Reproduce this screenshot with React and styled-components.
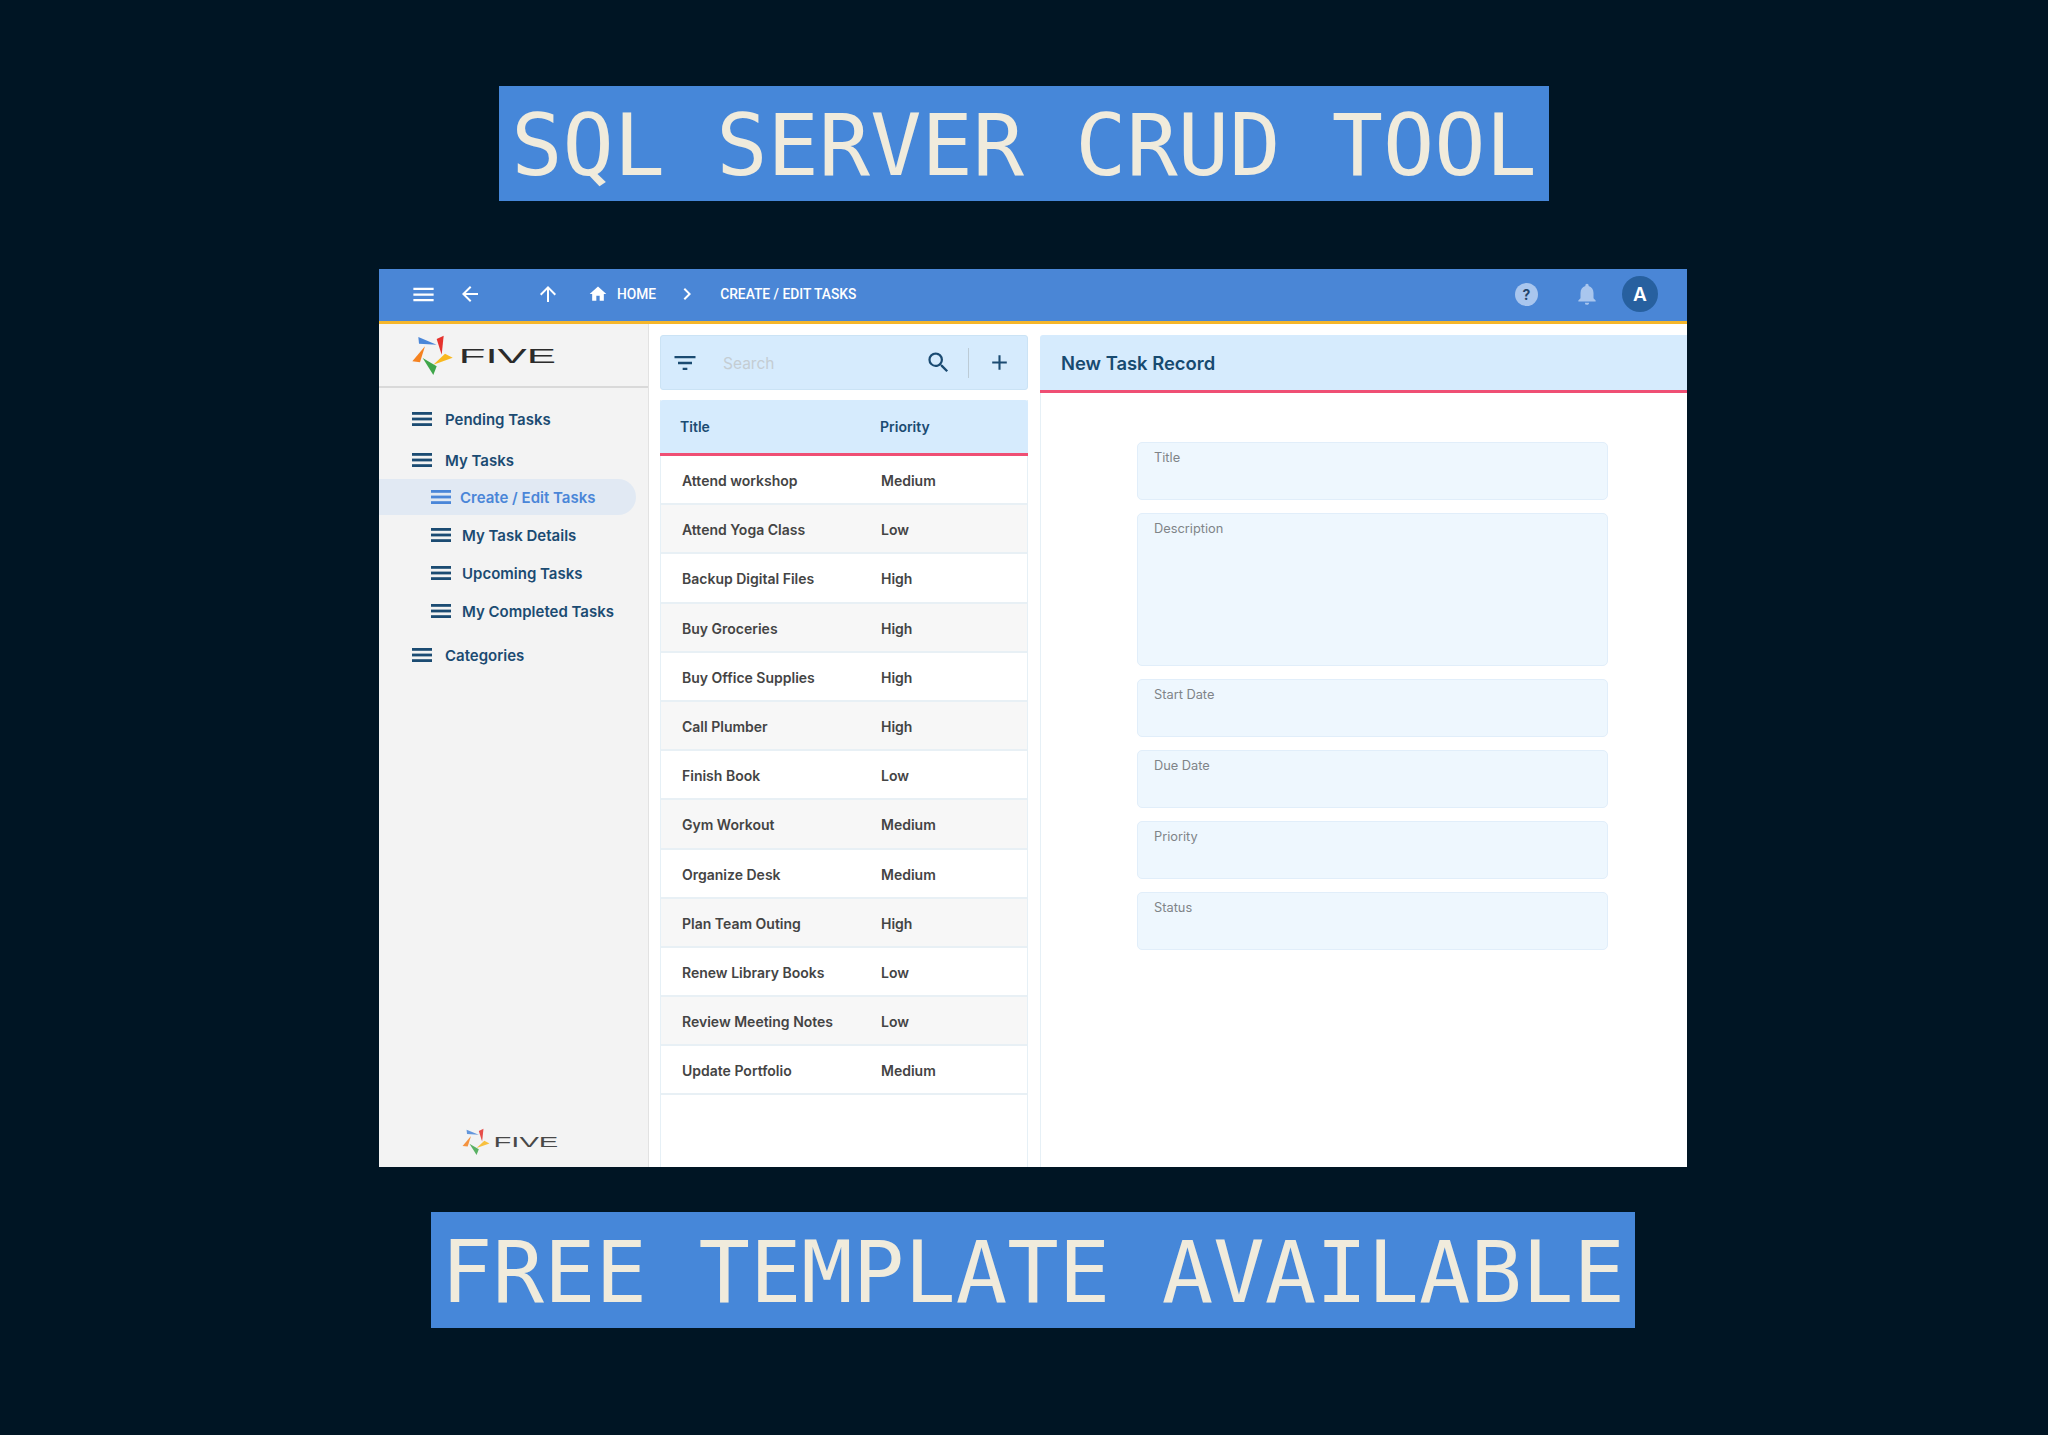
import React from 'react';
import styled, { createGlobalStyle } from 'styled-components';
import {
  MdMenu,
  MdArrowBack,
  MdArrowUpward,
  MdHome,
  MdChevronRight,
  MdSearch,
  MdAdd,
  MdFilterList,
  MdNotifications,
} from 'react-icons/md';

const GlobalStyle = createGlobalStyle`
  html, body {
    margin: 0;
    padding: 0;
    background: #001524;
  }
`;

const Page = styled.div`
  width: 2048px;
  height: 1435px;
  padding-top: 86px;
  box-sizing: border-box;
  overflow: hidden;
  background: #001524;
  font-family: Inter, "Liberation Sans", sans-serif;
`;

const Banner = styled.div`
  box-sizing: border-box;
  width: ${(p) => p.$width}px;
  height: ${(p) => p.$height}px;
  margin-left: ${(p) => p.$left}px;
  margin-top: ${(p) => p.$top}px;
  padding-top: 5px;
  display: flex;
  align-items: center;
  justify-content: center;
  background: #4687d9;
  color: #f0ebdc;
  font-family: "DejaVu Sans Mono", monospace;
  font-size: ${(p) => p.$font}px;
  line-height: 1;
  white-space: pre;
`;

const Window = styled.div`
  width: 1308px;
  height: 898px;
  margin: 68px 0 0 379px;
  display: flex;
  flex-direction: column;
  background: #fff;
`;

const Topbar = styled.header`
  flex: none;
  box-sizing: content-box;
  height: 50px;
  display: flex;
  align-items: center;
  padding: 0 29px 2px 31px;
  background: #4a86d6;
  border-bottom: 3px solid #f5b62b;
  color: #fff;
`;

const TopIcon = styled.span`
  display: flex;
  margin-left: ${(p) => p.$left || 0}px;
  font-size: ${(p) => p.$size || 24}px;
`;

const Crumb = styled.span`
  margin-left: ${(p) => p.$left}px;
  font-family: Roboto, sans-serif;
  font-size: 13.8px;
  font-weight: 500;
`;

const TopRight = styled.div`
  margin-left: auto;
  display: flex;
  align-items: center;
`;

const HelpBadge = styled.span`
  width: 23px;
  height: 23px;
  border-radius: 50%;
  display: flex;
  align-items: center;
  justify-content: center;
  background: #a9c6ee;
  color: #23456b;
  font-size: 14px;
  font-weight: 700;
`;

const BellIcon = styled.span`
  display: flex;
  margin-left: 36px;
  color: #a9c6ee;
  font-size: 26px;
`;

const Avatar = styled.span`
  width: 36px;
  height: 36px;
  margin-left: 22px;
  border-radius: 50%;
  display: flex;
  align-items: center;
  justify-content: center;
  background: #27609f;
  color: #fff;
  font-size: 19px;
  font-weight: 600;
`;

const Body = styled.div`
  flex: 1;
  min-height: 0;
  display: flex;
`;

const Sidebar = styled.aside`
  flex: none;
  box-sizing: border-box;
  width: 270px;
  display: flex;
  flex-direction: column;
  background: #f3f3f3;
  border-right: 1px solid #e2e2e2;
`;

const SideHead = styled.div`
  flex: none;
  box-sizing: border-box;
  height: 64px;
  padding: 9px 0 0 31px;
  border-bottom: 2px solid #d9d9d9;
`;

const Nav = styled.nav`
  display: flex;
  flex-direction: column;
  gap: 5px;
  padding-top: 13px;
`;

const NavGroup = styled.div`
  display: flex;
  flex-direction: column;
  margin-bottom: 3px;
`;

const SubList = styled.div`
  display: flex;
  flex-direction: column;
  gap: 2px;
  margin-top: 1px;
`;

const NavItem = styled.div`
  height: 36px;
  width: 257px;
  box-sizing: border-box;
  display: flex;
  align-items: center;
  gap: ${(p) => (p.$sub ? (p.$active ? 9 : 11) : 13)}px;
  padding-left: ${(p) => (p.$sub ? 52 : 33)}px;
  border-radius: 0 18px 18px 0;
  background: ${(p) => (p.$active ? '#e1e9f3' : 'transparent')};
  color: ${(p) => (p.$active ? '#4a86d8' : '#1b4b72')};
  font-size: 15px;
  font-weight: 600;
`;

const SideFoot = styled.div`
  margin-top: auto;
  display: flex;
  justify-content: center;
  padding: 0 7px 10px 0;
  opacity: 0.85;
`;

const Main = styled.main`
  flex: 1;
  min-width: 0;
  display: flex;
  gap: 12px;
  padding: 11px 0 0 11px;
`;

const ListColumn = styled.section`
  flex: none;
  width: 368px;
  display: flex;
  flex-direction: column;
  gap: 10px;
`;

const SearchBar = styled.div`
  flex: none;
  box-sizing: border-box;
  height: 55px;
  display: flex;
  align-items: center;
  padding: 0 15px 0 10px;
  background: #d6ebfd;
  border: 1px solid #cbe3f5;
  border-radius: 3px;
  color: #1b4b72;
`;

const IconSlot = styled.span`
  display: flex;
  margin-left: ${(p) => p.$left || 0}px;
  font-size: ${(p) => p.$size || 24}px;
`;

const Placeholder = styled.span`
  margin-left: 24px;
  flex: 1;
  padding-top: 1px;
  color: #c4cdd3;
  font-size: 15.5px;
`;

const BarDivider = styled.span`
  width: 1px;
  height: 30px;
  margin-left: 16px;
  background: #bccbd6;
`;

const ListPanel = styled.div`
  flex: 1;
  min-height: 0;
  display: flex;
  flex-direction: column;
  border-left: 1px solid #e6f0f6;
  border-right: 1px solid #e6f0f6;
`;

const HeadRow = styled.div`
  flex: none;
  box-sizing: border-box;
  height: 56px;
  margin: 0 -1px;
  display: grid;
  grid-template-columns: 200px 1fr;
  align-items: center;
  padding-left: 20px;
  background: #d6ebfd;
  border-bottom: 3px solid #ef4f74;
  border-radius: 3px 3px 0 0;
  color: #1b4b72;
  font-size: 14px;
  font-weight: 600;
`;

const Row = styled.div`
  box-sizing: border-box;
  height: 49.2px;
  padding: 2px 0 0 21px;
  display: grid;
  grid-template-columns: 199px 1fr;
  align-items: center;
  background: ${(p) => (p.$odd ? '#f7f7f7' : '#fff')};
  border-bottom: 2px solid #e8f0f5;
  color: #444;
  font-size: 14px;
  font-weight: 600;
`;

const FormPanel = styled.section`
  flex: 1;
  min-width: 0;
  display: flex;
  flex-direction: column;
`;

const FormHead = styled.div`
  flex: none;
  box-sizing: border-box;
  height: 58px;
  display: flex;
  align-items: center;
  padding: 0 0 0 21px;
  background: #d6ebfd;
  border-bottom: 3px solid #ef4f74;
  border-radius: 3px 0 0 0;
  color: #174a70;
  font-size: 18.4px;
  font-weight: 600;
`;

const FormBody = styled.div`
  flex: 1;
  display: flex;
  flex-direction: column;
  gap: 13px;
  padding: 49px 0 0 96px;
  border-left: 1px solid #e6f0f6;
`;

const Field = styled.div`
  box-sizing: border-box;
  width: 471px;
  height: ${(p) => p.$height || 58}px;
  padding: 7px 16px;
  background: #eef7fe;
  border: 1px solid #e1eefa;
  border-radius: 5px;
  color: #7f8488;
  font-size: 12.8px;
`;

const Bars = () => (
  <svg width="20" height="14" viewBox="0 0 20 14" fill="currentColor" style={{ flex: 'none' }}>
    <rect y="0" width="20" height="2.8" />
    <rect y="5.6" width="20" height="2.8" />
    <rect y="11.2" width="20" height="2.8" />
  </svg>
);

const FiveLogo = ({ scale = 1 }) => (
  <svg width={147 * scale} height={45 * scale} viewBox="30 40 441 135">
    <polygon points="55,52 110,75 57,72" fill="#4a86d8" />
    <polygon points="131,48 110,58 125,105" fill="#e5322d" />
    <polygon points="158,114 135,102 100,135" fill="#f9b81f" />
    <polygon points="75,80 37,125 60,128" fill="#f58220" />
    <polygon points="68,115 110,140 100,166" fill="#3fa64a" />
    <text
      x="176"
      y="131"
      textLength="292"
      lengthAdjust="spacingAndGlyphs"
      fontFamily="Liberation Sans, sans-serif"
      fontSize="63"
      fill="#2b2b2b"
    >
      FIVE
    </text>
  </svg>
);

const tasks = [
  ['Attend workshop', 'Medium'],
  ['Attend Yoga Class', 'Low'],
  ['Backup Digital Files', 'High'],
  ['Buy Groceries', 'High'],
  ['Buy Office Supplies', 'High'],
  ['Call Plumber', 'High'],
  ['Finish Book', 'Low'],
  ['Gym Workout', 'Medium'],
  ['Organize Desk', 'Medium'],
  ['Plan Team Outing', 'High'],
  ['Renew Library Books', 'Low'],
  ['Review Meeting Notes', 'Low'],
  ['Update Portfolio', 'Medium'],
];

const fields = [
  ['Title', 58],
  ['Description', 153],
  ['Start Date', 58],
  ['Due Date', 58],
  ['Priority', 58],
  ['Status', 58],
];

const App = () => {
  return (
    <Page>
      <GlobalStyle />
      <Banner $width={1050} $height={115} $left={499} $top={0} $font={85.2}>SQL SERVER CRUD TOOL</Banner>
      <Window>
        <Topbar>
          <TopIcon $size={27}><MdMenu /></TopIcon>
          <TopIcon $size={24} $left={21}><MdArrowBack /></TopIcon>
          <TopIcon $size={24} $left={54}><MdArrowUpward /></TopIcon>
          <TopIcon $size={20} $left={28}><MdHome /></TopIcon>
          <Crumb $left={9}>HOME</Crumb>
          <TopIcon $size={24} $left={19}><MdChevronRight /></TopIcon>
          <Crumb $left={21}>CREATE / EDIT TASKS</Crumb>
          <TopRight>
            <HelpBadge>?</HelpBadge>
            <BellIcon><MdNotifications /></BellIcon>
            <Avatar>A</Avatar>
          </TopRight>
        </Topbar>
        <Body>
          <Sidebar>
            <SideHead>
              <FiveLogo />
            </SideHead>
            <Nav>
              <NavItem><Bars />Pending Tasks</NavItem>
              <NavGroup>
                <NavItem><Bars />My Tasks</NavItem>
                <SubList>
                  <NavItem $sub $active><Bars />Create / Edit Tasks</NavItem>
                  <NavItem $sub><Bars />My Task Details</NavItem>
                  <NavItem $sub><Bars />Upcoming Tasks</NavItem>
                  <NavItem $sub><Bars />My Completed Tasks</NavItem>
                </SubList>
              </NavGroup>
              <NavItem><Bars />Categories</NavItem>
            </Nav>
            <SideFoot>
              <FiveLogo scale={0.667} />
            </SideFoot>
          </Sidebar>
          <Main>
            <ListColumn>
              <SearchBar>
                <IconSlot $size={28}><MdFilterList /></IconSlot>
                <Placeholder>Search</Placeholder>
                <IconSlot $size={27}><MdSearch /></IconSlot>
                <BarDivider />
                <IconSlot $size={25} $left={18}><MdAdd /></IconSlot>
              </SearchBar>
              <ListPanel>
                <HeadRow><span>Title</span><span>Priority</span></HeadRow>
                {tasks.map(([title, priority], i) => (
                  <Row key={title} $odd={i % 2 === 1}>
                    <span>{title}</span>
                    <span>{priority}</span>
                  </Row>
                ))}
              </ListPanel>
            </ListColumn>
            <FormPanel>
              <FormHead>New Task Record</FormHead>
              <FormBody>
                {fields.map(([label, height]) => (
                  <Field key={label} $height={height}>{label}</Field>
                ))}
              </FormBody>
            </FormPanel>
          </Main>
        </Body>
      </Window>
      <Banner $width={1204} $height={116} $left={431} $top={45} $font={85.5}>FREE TEMPLATE AVAILABLE</Banner>
    </Page>
  );
};

export default App;
